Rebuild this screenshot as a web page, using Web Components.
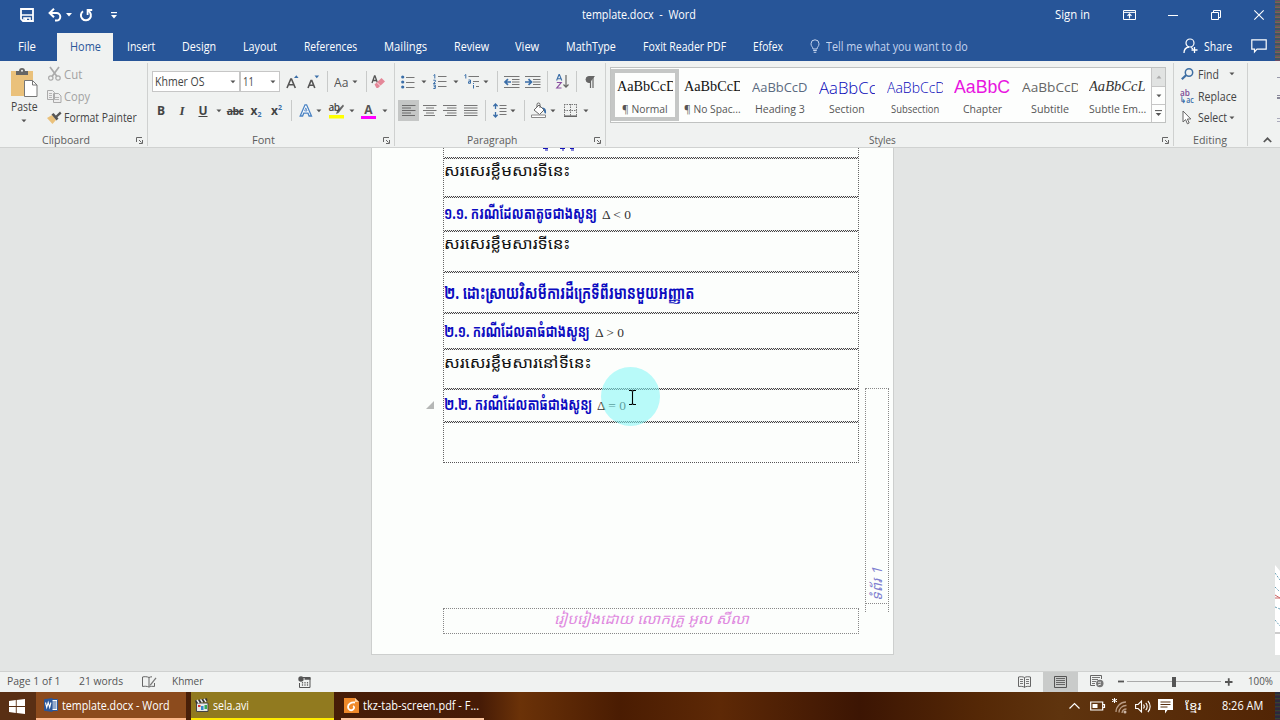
<!DOCTYPE html>
<html lang="km">
<head>
<meta charset="utf-8">
<title>template.docx - Word</title>
<style>
    html, body{
        margin: 0;
        width: 1280px;
        height: 720px;
        overflow: hidden;
        font-family: "Open Sans", "Noto Sans", "Khmer OS", "Noto Sans Khmer", sans-serif;
        font-size: 12px;
        color: #444;
    }
</style>
</head>
<body>
<word-window></word-window>
<script>
// icons: [width, height, markup]
const ICONS = {
    save: [14, 14, '<path d="M1 1h12v12H3l-2-2z" fill="none" stroke="#fff" stroke-width="1.8"/><path d="M1 7h12M4 13v-3h6v3" fill="none" stroke="#fff" stroke-width="1.6"/><path d="M5 10h2v3H5z" fill="#fff"/>'],
    undo: [14, 14, '<path d="M2 5h6.5a3.8 3.8 0 0 1 0 7.6H7" fill="none" stroke="#fff" stroke-width="2"/><path d="M6 .8 1.6 5 6 9.2" fill="none" stroke="#fff" stroke-width="2"/>'],
    redo: [14, 14, '<path d="M4 3.2a5 5 0 1 0 5.3-.3" fill="none" stroke="#fff" stroke-width="2"/><path d="M8.6 7V2h4.6" fill="none" stroke="#fff" stroke-width="1.8"/>'],
    caretw: [6, 4, '<path d="M0 0h6L3 3.4z" fill="#fff"/>'],
    qat: [6, 7, '<path d="M0 .6h6" stroke="#fff" stroke-width="1.2"/><path d="M0 3h6L3 6.4z" fill="#fff"/>'],
    caret: [6, 4, '<path d="M.4 .4h5L3 3.2z" fill="#555"/>'],
    caretlight: [6, 4, '<path d="M.4 3.4h5L3 .6z" fill="#aaa"/>'],
    more: [7, 7, '<path d="M0 .6h7" stroke="#555"/><path d="M.7 3h5.6L3.5 6z" fill="#555"/>'],
    display: [13, 10, '<path d="M.5.5h12v9H.5zM.5 2.4h12" fill="none" stroke="#fff"/><path d="M6.5 8.6V4M4.5 5.8l2-2 2 2" fill="none" stroke="#fff" stroke-width="1.2"/>'],
    min: [10, 10, '<path d="M0 5.5h10" stroke="#fff"/>'],
    restore: [10, 10, '<path d="M.5 2.5h7v7h-7zM2.5 2.5v-2h7v7h-2" fill="none" stroke="#fff"/>'],
    close: [10, 10, '<path d="m.3.3 9.4 9.4M9.7.3.3 9.7" stroke="#fff" stroke-width="1.1"/>'],
    bulb: [10, 14, '<path d="M3 10C3 8 1 7.400 1 4.800a4 4 0 0 1 8 0C9 7.400 7 8 7 10zM3.200 11.500h3.600M3.700 13.300h2.600" fill="none" stroke="#c3d3ee"/>'],
    share: [15, 16, '<circle cx="7" cy="5" r="4" fill="none" stroke="#fff" stroke-width="1.2"/><path d="M1 15c0-3.500 2-5.500 5-6M8 9.500l2 1.200M11.500 9v6M8.500 12h6" fill="none" stroke="#fff" stroke-width="1.3"/>'],
    comment: [16, 14, '<path d="M.8.8h14.400v9.400H6L3.500 13v-2.800H.8z" fill="none" stroke="#fff" stroke-width="1.200"/>'],
    paste: [28, 29, '<path d="M1 3h22v25H1z" fill="#eac17b"/><path d="M6 3h3a3 3 0 0 1 6 0h3v4H6z" fill="#666"/><circle cx="12" cy="2.800" r="1" fill="#eee"/><path d="M14.500 12.500h8l4.500 4.500v11.500H14.500z" fill="#fff" stroke="#777"/><path d="M22.500 12.500V17H27" fill="none" stroke="#777"/>'],
    cut: [13, 14, '<path d="m2 0 7 9.500M11 0 4 9.500" stroke="#aaa" stroke-width="1.700"/><circle cx="2.800" cy="11" r="2.200" fill="none" stroke="#aaa" stroke-width="1.200"/><circle cx="10" cy="11" r="2.200" fill="none" stroke="#aaa" stroke-width="1.200"/>'],
    copy: [15, 13, '<path d="M.5.500h5l2 2v7H.5zM6.500 3.500h5l2.500 2.500v6.500H6.500z" fill="#eee" stroke="#aaa"/><path d="M2 3.500h3M2 5.500h3M2 7.500h3M8 7.500h4M8 9.500h4" stroke="#b5b5b5"/>'],
    painter: [15, 13, '<path d="m0 7 5-3 4 5-3.500 4z" fill="#eac17b"/><path d="m4.500 3.500 2-1.500 5 5.500-2 2z" fill="#555"/><path d="m8.500 5 4.500-4.500 1.500 2-4.500 4z" fill="#555"/>'],
    grow: [13, 14, '<path d="m1 13 3.800-9h.7l3.800 9M2.500 9.800h5.300" fill="none" stroke="#555" stroke-width="1.600"/><path d="M8 3h4.600L10.300.2z" fill="#3a6ea8"/>'],
    shrink: [13, 14, '<path d="m1 13 3-7.500h.8l3 7.500M2.300 10.200h4.300" fill="none" stroke="#555" stroke-width="1.600"/><path d="M7.500.5h4.600L9.800 3.300z" fill="#3a6ea8"/>'],
    clear: [15, 14, '<path d="m0 8 2.500-7h.5l2.500 7M1 5.500h3.600" fill="none" stroke="#555" stroke-width="1.300"/><path d="m2.500 9.500 7-6.500 3.500 3.500-7 6.500H4.500z" fill="#e48798"/><path d="m5 7.500 3.500 3.500" stroke="#f5e5e8"/>'],
    effects: [14, 13, '<path d="M1.200 12 6 .8h1.600L12.500 12h-2.400L9 9.200H4.700L3.600 12z" fill="#fff" stroke="#4a83c3" stroke-width="1.300"/><path d="M5.600 7h2.500L6.800 3.800z" fill="#eef" stroke="#4a83c3" stroke-width=".8"/>'],
    marker: [16, 16, '<path d="M0 12h15v3.500H0z" fill="#ff0"/><path d="m7 11 1-3 6-6.500 1 1.500-5.500 7z" fill="#666"/>'],
    bullets: [14, 14, '<g fill="#3a6ea8"><circle cx="1.700" cy="2" r="1.600"/><circle cx="1.700" cy="7" r="1.600"/><circle cx="1.700" cy="12" r="1.600"/></g><path d="M5 2.500h8.500M5 7.500h8.500M5 12.500h8.500" stroke="#777"/>'],
    numbers: [14, 15, '<path d="M.5 1.500 1.800.5V4.500M.3 6.200h2v1.500L.4 9.500h2.200M.3 11h2v3.500h-2M.8 12.700h1.500" fill="none" stroke="#3a6ea8"/><path d="M5 2.500h8.500M5 7.500h8.500M5 12.500h8.500" stroke="#777"/>'],
    multi: [16, 15, '<path d="M.5 1.500 1.800.5V4.500M4.500 6h2v3.300h-2V7.700h2M9.500 11v3.500M9.500 9v1" fill="none" stroke="#3a6ea8"/><path d="M4.500 2.500H15M9 7.500h6M12 12.500h3" stroke="#777"/>'],
    outdent: [16, 12, '<path d="M0 .5h15.500M8 3.500h7.500M8 6h7.500M8 8.500h7.500M0 11.500h15.500" stroke="#777"/><path d="M7 6H1.500M4 3.200 1 6l3 2.800" fill="none" stroke="#3a6ea8" stroke-width="1.700"/>'],
    indent: [16, 12, '<path d="M0 .5h15.500M8 3.500h7.500M8 6h7.500M8 8.500h7.500M0 11.500h15.500" stroke="#777"/><path d="M0 6h5.500M3.500 3.200 6.500 6l-3 2.800" fill="none" stroke="#3a6ea8" stroke-width="1.700"/>'],
    sort: [13, 15, '<path d="m.6 6.500 2.400-6h.4l2.400 6M1.500 4.700h3.500" fill="none" stroke="#3a6ea8" stroke-width="1.100"/><path d="M.8 8.500h4.400L.8 14h4.700" fill="none" stroke="#8a4fa0" stroke-width="1.200"/><path d="M10 1v12M7.500 10.500 10 13.200l2.500-2.700" fill="none" stroke="#666" stroke-width="1.200"/>'],
    pilcrow: [10, 12, '<path d="M5 6.500H4a3 3 0 0 1 0-6h5.500" fill="#666" stroke="#666"/><path d="M5.500.5V12M8 .5V12" stroke="#666" stroke-width="1.200"/>'],
    left: [14, 11, '<path d="M0 .5h13.500M0 3h9M0 5.500h13.500M0 8h9M0 10.500h13" stroke="#6a6a6a"/>'],
    center: [14, 11, '<path d="M0 .5h13.500M3 3h8M0 5.500h13.500M3 8h8M1 10.500h11" stroke="#777"/>'],
    right: [14, 11, '<path d="M0 .5h13.500M4 3h9.500M0 5.500h13.500M4 8h9.500M2 10.500h11.500" stroke="#777"/>'],
    justify: [14, 11, '<path d="M0 .5h13.500M0 3h13.500M0 5.500h13.500M0 8h13.500M0 10.500h13.500" stroke="#777"/>'],
    spacing: [14, 15, '<path d="M2.500 1v5M2.500 9v5M.4 3.200 2.500 1l2.100 2.200M.4 11.800 2.500 14l2.100-2.200" fill="none" stroke="#3a6ea8" stroke-width="1.300"/><path d="M6.500 2.500h7M6.500 5.500h7M6.500 8.500h7M6.500 11.500h7" stroke="#777"/>'],
    bucket: [17, 15, '<path d="m3 7 5-5 5 5-4.500 4.500z" fill="#fff" stroke="#666"/><path d="M6 4V1.500a1.500 1.500 0 0 1 3 0V5" fill="none" stroke="#666"/><path d="M11 4.500c3 0 4.500 2 4 6-2 0-2-2-2-3.500z" fill="#3a6ea8"/><path d="M.5 12h14v2.500H.5z" fill="#fff" stroke="#888"/>'],
    borders: [13, 13, '<path d="M.5 0v12M6.500 0v12M12.500 0v12M0 .5h13M0 6.500h13" stroke="#777" stroke-dasharray="1.500 1"/><path d="M0 12.200h13" stroke="#555" stroke-width="1.400"/>'],
    find: [13, 12, '<circle cx="8" cy="4.500" r="3.700" fill="none" stroke="#3f6fa3" stroke-width="1.500"/><path d="m5.300 7-4.500 4.300" stroke="#3f6fa3" stroke-width="2.200"/>'],
    select: [10, 15, '<path d="M1 1v11l2.600-2.400 1.800 4.200 1.800-.8-1.800-4h3.400z" fill="#fff" stroke="#666"/>'],
    launcher: [7, 7, '<path d="M.5 5V.5H6M3 3l2.500 2.500M6.500 3v3.500H3" fill="none" stroke="#666"/>'],
    collapse: [9, 6, '<path d="m.8 5 3.700-3.700L8.200 5" fill="none" stroke="#555" stroke-width="1.700"/>'],
    proof: [15, 12, '<path d="M7 1.500C5 .5 2.500.5.500 1v9.500c2-.4 4.500-.4 6.500.6 1.500-.8 3.500-1 5.500-.6V7M7 1.500v9.500M7 1.500C8 1 9 .8 10 .8" fill="none" stroke="#666"/><path d="m8 8.500 5.500-7 1 .8-5.500 7-1.500.6z" fill="#777"/>'],
    macro: [13, 12, '<path d="M5 1.500h7v10H1.500V7" fill="none" stroke="#555"/><circle cx="3" cy="3" r="2.700" fill="#555"/><path d="M6.500 2.500h6" stroke="#555" stroke-width="2.500"/><path d="M4.500 6v4.500M7 6v4.500M9.500 6v4.500" stroke="#666" stroke-width="1.200" stroke-dasharray="1.500 .8"/>'],
    read: [13, 12, '<path d="M6.500 1.500C5 .6 2.500.6.500 1v9.500c2-.3 4.500-.3 6 .8 1.500-1.100 4-1.100 6-.8V1c-2-.4-4.500-.4-6 .5v10" fill="none" stroke="#666"/><path d="M2 3.500h3M2 5.500h3M2 7.500h3M8 3.500h3M8 5.500h3M8 7.500h3" stroke="#777"/>'],
    print: [13, 12, '<path d="M.5.500h12v11H.5z" fill="none" stroke="#555"/><path d="M2 2.500h9M2 4.500h9M2 6.500h9M2 8.500h9" stroke="#666"/>'],
    web: [14, 13, '<path d="M11.500 4V.500H.500v10H5" fill="none" stroke="#666"/><path d="M2 2.500h8M2 4.500h6M2 6.500h4M2 8.500h3" stroke="#777"/><circle cx="9.800" cy="8.500" r="3.700" fill="#777"/><path d="M8 7c1 1 2-.5 3 .5M8 10l3-1" stroke="#eee" fill="none"/>'],
    minus: [6, 3, '<path d="M0 1.500h6" stroke="#555" stroke-width="1.800"/>'],
    plus: [8, 8, '<path d="M0 4h7.500M3.750.3v7.500" stroke="#555" stroke-width="1.800"/>'],
    start: [16, 15, '<path d="m0 2 6.800-1v6H0zM7.700.9 16 0v7H7.700zM0 8h6.800v6L0 13zM7.700 8H16v7l-8.300-1z" fill="#fff"/>'],
    word: [14, 14, '<path d="M7 1.500h6.500v11H7z" fill="#fff" stroke="#2b579a"/><path d="M8 4h4.500M8 6h4.500M8 8h4.500M8 10h4.500" stroke="#2b579a"/><path d="m0 1.300 8.500-1.300v14L0 12.700z" fill="#2b579a"/><path d="m1.500 4.500 1.200 5 1.500-5 1.500 5 1.200-5" fill="none" stroke="#fff" stroke-width="1.100"/>'],
    clip: [14, 14, '<path d="M1.500 5h11.500v8.500H1.500z" fill="#e8e8e8" stroke="#444"/><path d="m0 2.500 12-2.300.5 3L1 5.500z" fill="#333"/><path d="m2 2 2 3M5.500 1.300l2 3M9 .8l2 3" stroke="#eee" stroke-width="1.500"/><path d="M3 7h2.500v2H3z" fill="#d33"/><path d="M6 8h2.500v4H6z" fill="#38c"/><path d="M9.500 7H12v4H9.500z" fill="#3a5"/>'],
    foxit: [15, 15, '<path d="M0 0h11l4 4v11H0z" fill="#ef8a2b"/><path d="M11 0v4h4" fill="#fbd0a0"/><path d="M11 4.500C7 4 4 6 4 9s3 4 5 2.500c1.500-1 1.500-3 0-3.500" fill="none" stroke="#fff" stroke-width="1.800"/>'],
    up: [11, 6, '<path d="m.5 5.500 5-5 5 5" fill="none" stroke="#fff" stroke-width="1.200"/>'],
    battery: [15, 10, '<path d="M.7 1h12v8h-12zM13 3.500h1.500v3H13" fill="none" stroke="#fff" stroke-width="1.200"/><path d="M2.500 3h5v4h-5z" fill="#fff"/>'],
    wifi: [16, 16, '<path d="M4 14A10 10 0 0 1 14 4M7 14.500a7 7 0 0 1 7.500-7M10 15a4.500 4.500 0 0 1 4.500-4" fill="none" stroke="#b99b84" stroke-width="1.300"/><circle cx="13" cy="14" r="1.500" fill="#cbb5a5"/><path d="M2.500 0v5M0 1.200l5 2.600M5 1.200 0 3.800" stroke="#fff"/>'],
    sound: [16, 13, '<path d="M.6 4.500h2.500L6.500 1v11L3.100 8.500H.6zM8.500 4.500c1 1.200 1 2.800 0 4M10.700 2.800c2 2 2 5.400 0 7.400M12.900 1c3 3 3 8 0 11" fill="none" stroke="#fff" stroke-width="1.100"/>'],
    notice: [15, 15, '<path d="M0 0h15v11H9.500L7 14.500V11H0z" fill="#fff"/><path d="M2.500 3h10M2.500 5.500h10M2.500 8h7" stroke="#59300f"/>'],
    ibeam: [7, 15, '<path d="M0 .500h2.500l1 .8 1-.8H7M0 14.500h2.500l1-.8 1 .8H7M3.500 1v13" fill="none" stroke="#000" stroke-width="1.100"/>']
};

// base class: every element clones its template in an open shadow root
class WordElement extends HTMLElement{
    constructor(){
        super();
        this.attachShadow({mode: 'open'});
    }
    connectedCallback(){
        const template = document.createElement("template");
        template.innerHTML = this.getTemplate() + `<style>${this.getStyle()}</style>`;
        this.shadowRoot.replaceChildren(template.content.cloneNode(true));
    }
    at(name){
        return this.getAttribute(name) || "";
    }
}

class MsIcon extends WordElement{
    getTemplate(){
        const [w, h, body] = ICONS[this.at("name")];
        return `<svg width="${w}" height="${h}" viewBox="0 0 ${w} ${h}">${body}</svg>`;
    }
    getStyle(){
        return `
            :host{ display: flex; flex: none; align-items: center; justify-content: center; ${this.at("w") ? `width: ${this.at("w")}px;` : ""} }
            svg{ display: block; flex: none; overflow: visible; }
        `;
    }
}

// text squeezed or stretched to a given width
class FitText extends WordElement{
    getTemplate(){
        return `<span><slot></slot></span>`;
    }
    getStyle(){
        return `
            :host{ display: block; flex: none; width: ${this.at("w")}px; white-space: pre; }
            span{ display: inline-block; transform-origin: 0 50%; }
        `;
    }
    connectedCallback(){
        super.connectedCallback();
        const span = this.shadowRoot.querySelector("span");
        const natural = span.offsetWidth;
        if(natural) span.style.transform = `scaleX(${this.at("w") / natural})`;
    }
}

class TitleBar extends WordElement{
    getTemplate(){
        return `
            <nav>
                <ms-icon name="save"></ms-icon>
                <ms-icon name="undo" style="margin-left:14px"></ms-icon>
                <ms-icon name="caretw" style="margin-left:4px"></ms-icon>
                <ms-icon name="redo" style="margin-left:7px"></ms-icon>
                <ms-icon name="qat" style="margin-left:18px"></ms-icon>
            </nav>
            <fit-text w="114">template.docx  -  Word</fit-text>
            <aside>
                <fit-text w="35">Sign in</fit-text>
                <ms-icon name="display" w="78"></ms-icon>
                <ms-icon name="min" w="9"></ms-icon>
                <ms-icon name="restore" w="77"></ms-icon>
                <ms-icon name="close" w="9"></ms-icon>
            </aside>
        `;
    }
    getStyle(){
        return `
            :host{ display: grid; grid-template-columns: 582px 114px 1fr; align-items: center; height: 33px; padding-bottom: 4px; box-sizing: border-box; color: #fff; }
            nav{ display: flex; align-items: center; padding: 1px 0 0 20px; }
            aside{ display: flex; align-items: center; padding-left: 359px; }
        `;
    }
}

class TabItem extends WordElement{
    getTemplate(){
        return `<fit-text w="${this.at("tw")}"><slot></slot></fit-text>`;
    }
    getStyle(){
        return `
            :host{ display: flex; flex: none; justify-content: center; align-items: center; box-sizing: border-box; width: ${this.at("w")}px; height: 28px; padding-bottom: 2px; }
            :host([active]){ background: #f0f2f1; color: #2b579a; }
        `;
    }
}

class TabBar extends WordElement{
    getTemplate(){
        // label, tab width, label width
        const tabs = [["File", 54, 18], ["Home", 56, 31], ["Insert", 56, 28], ["Design", 59, 34], ["Layout", 64, 34], ["References", 77, 53],
            ["Mailings", 73, 43], ["Review", 59, 35], ["View", 52, 24], ["MathType", 76, 50], ["Foxit Reader PDF", 111, 83], ["Efofex", 56, 30]];
        return tabs.map(([label, w, tw]) =>
            `<tab-item ${label == "Home" ? 'active style="margin-left:3px"' : ''} w="${w}" tw="${tw}">${label}</tab-item>`
        ).join("") + `
            <p><ms-icon name="bulb" w="10"></ms-icon><fit-text w="142">Tell me what you want to do</fit-text></p>
            <div><ms-icon name="share" w="15"></ms-icon><fit-text w="28">Share</fit-text><ms-icon name="comment" w="16"></ms-icon></div>
        `;
    }
    getStyle(){
        return `
            :host{ display: flex; height: 28px; align-items: center; color: #fff; }
            p{ display: flex; align-items: center; gap: 6px; margin: 0 0 0 14px; color: #c3d3ee; padding-bottom: 2px; }
            div{ display: flex; align-items: center; margin-left: auto; padding: 0 13px 2px 0; gap: 6px; }
            div ms-icon:last-child{ margin-left: 13px; }
        `;
    }
}

class RibbonGroup extends WordElement{
    getTemplate(){
        return `
            <main><slot></slot></main>
            <footer><fit-text w="${this.at("tw")}">${this.at("label")}</fit-text></footer>
            ${this.hasAttribute("launcher") ? '<ms-icon name="launcher"></ms-icon>' : ''}
        `;
    }
    getStyle(){
        return `
            :host{ display: grid; grid-template: 67px 20px / 1fr 16px; box-sizing: border-box; width: ${this.at("w")}px; border-image: linear-gradient(#0000 3px, #cfd1d0 3px 84px, #0000 84px) 1; border-right: 1px solid; }
            main{ grid-column: 1 / 3; min-width: 0; }
            footer{ display: flex; justify-content: center; align-items: center; padding-left: ${this.at("shift") || 0}px; color: #5c5c5c; font-size: 11px; padding-top: 3px; box-sizing: border-box; }
            ms-icon{ padding-top: 5px; }
        `;
    }
}

// horizontal strip of commands
class CommandRow extends WordElement{
    getTemplate(){ return `<slot></slot>`; }
    getStyle(){
        return `
            :host{ display: flex; align-items: center; height: ${this.at("h") || 29}px; }
            ::slotted(i){ flex: none; height: 21px; background: linear-gradient(#c8cac9, #c8cac9) center / 1px 100% no-repeat; }
            ::slotted(b){ flex: none; text-align: center; font-size: 12px; color: #444; }
        `;
    }
}

class ComboBox extends WordElement{
    getTemplate(){
        return `<fit-text w="${this.at("tw")}"><slot></slot></fit-text><ms-icon name="caret"></ms-icon>`;
    }
    getStyle(){
        return `:host{ display: flex; flex: none; align-items: center; justify-content: space-between; box-sizing: border-box; width: ${this.at("w")}px; height: 21px; padding: 0 3px 0 2px; border: 1px solid #c6c6c6; background: #fff; }`;
    }
}

class StyleCard extends WordElement{
    getTemplate(){
        return `<div><fit-text w="${this.at("pw") || 56}">${this.at("sample")}</fit-text></div><footer><fit-text w="${this.at("tw")}"><slot></slot></fit-text></footer>`;
    }
    getStyle(){
        return `
            :host{ display: grid; grid-template-rows: 27px 17px; justify-items: center; box-sizing: border-box; width: 67.5px; height: 52px; border: 4px solid transparent; }
            :host([active]){ border-color: #c5c7c6; }
            div{ display: flex; align-items: center; width: 56px; height: 28px; overflow: hidden; font: ${this.at("face")}; color: ${this.at("ink")}; }
            footer{ font-size: 11px; color: #555; line-height: 17px; }
        `;
    }
}

class StyleGallery extends WordElement{
    getTemplate(){
        return `
            <section>
                <style-card active sample="AaBbCcD" pw="59" face="14px 'Liberation Serif'" ink="#111" tw="46">¶ Normal</style-card>
                <style-card sample="AaBbCcD" pw="59" face="14px 'Liberation Serif'" ink="#111" tw="57">¶ No Spac...</style-card>
                <style-card sample="AaBbCcD" face="12.5px 'Open Sans'" ink="#5b6a80" tw="50">Heading 3</style-card>
                <style-card sample="AaBbCc" pw="58" face="300 17px 'Open Sans'" ink="#0808b8" tw="36">Section</style-card>
                <style-card sample="AaBbCcD" pw="58" face="300 14.5px 'Open Sans'" ink="#0808b8" tw="48">Subsection</style-card>
                <style-card sample="AaBbC" face="18px 'Liberation Sans'" ink="#e815e0" tw="39">Chapter</style-card>
                <style-card sample="AaBbCcD" pw="58" face="12px 'Open Sans'" ink="#666" tw="38">Subtitle</style-card>
                <style-card sample="AaBbCcL" face="italic 14px 'Liberation Serif'" ink="#333" tw="57">Subtle Em...</style-card>
            </section>
            <aside><ms-icon name="caretlight"></ms-icon><ms-icon name="caret"></ms-icon><ms-icon name="more"></ms-icon></aside>
        `;
    }
    getStyle(){
        return `
            :host{ display: flex; width: 556px; height: 56px; margin: 6px 0 0 4px; box-sizing: border-box; border: 1px solid #c0c2c1; background: #fdfefd; }
            section{ display: flex; width: 542px; padding-top: 1px; }
            aside{ display: grid; grid-template-rows: 18px 18px 18px; width: 13px; border-left: 1px solid #c6c6c6; }
            aside ms-icon + ms-icon{ border-top: 1px solid #c6c6c6; }
            aside ms-icon:first-child{ background: #e1e3e2; }
        `;
    }
}

class WordRibbon extends WordElement{
    getTemplate(){
        const sep = w => `<i style="width:${w}px"></i>`;
        const ic = (name, w) => `<ms-icon name="${name}" w="${w}"></ms-icon>`;
        return `
            <ribbon-group w="148" label="Clipboard" tw="48" launcher>
                <div class="clip">
                    <div class="paste">${ic("paste", 28)}<fit-text w="27">Paste</fit-text>${ic("caret", 8)}</div>
                    <div class="list">
                        <command-row h="22" class="dim">${ic("cut", 14)}<fit-text w="18">Cut</fit-text></command-row>
                        <command-row h="22" class="dim">${ic("copy", 14)}<fit-text w="26">Copy</fit-text></command-row>
                        <command-row h="21">${ic("painter", 14)}<fit-text w="73">Format Painter</fit-text></command-row>
                    </div>
                </div>
            </ribbon-group>
            <ribbon-group w="247" label="Font" tw="23" launcher shift="1">
                <command-row class="first" style="padding-left:4px">
                    <combo-box w="88" tw="50">Khmer OS</combo-box><combo-box w="40" tw="11">11</combo-box>
                    ${ic("grow", 25)}${ic("shrink", 16)}${sep(12)}<fit-text w="14" class="aa">Aa</fit-text>${ic("caret", 14)}${sep(8)}${ic("clear", 19)}
                </command-row>
                <command-row style="padding-left:4px">
                    <b style="width:18px">B</b><b style="width:24px;font-family:'Liberation Serif';font-style:italic;font-size:13px">I</b><b style="width:18px;text-decoration:underline">U</b>${ic("caret", 13)}
                    <b style="width:20px;font-size:10.5px;text-decoration:line-through;letter-spacing:-.6px">abc</b><b style="width:22px">x<span class="sub">2</span></b><b style="width:19px">x<span class="sup">2</span></b>
                    ${sep(10)}${ic("effects", 19)}${ic("caret", 8)}<div class="hl">${ic("marker", 16)}<span>ab</span></div>${ic("caret", 4)}<div class="fc">A</div>${ic("caret", 4)}
                </command-row>
            </ribbon-group>
            <ribbon-group w="211" label="Paragraph" tw="50" launcher>
                <command-row class="first" style="padding-left:3px">
                    ${ic("bullets", 20)}${ic("caret", 12)}${ic("numbers", 20)}${ic("caret", 12)}${ic("multi", 20)}${ic("caret", 8)}${sep(14)}${ic("outdent", 16)}${ic("indent", 26)}${sep(2)}${ic("sort", 28)}${sep(1)}${ic("pilcrow", 26)}
                </command-row>
                <command-row style="padding-left:3px">
                    <div class="on">${ic("left", 21)}</div>${ic("center", 21)}${ic("right", 20)}${ic("justify", 21)}${sep(8)}${ic("spacing", 22)}${ic("caret", 4)}${sep(18)}${ic("bucket", 12)}${ic("caret", 16)}${ic("borders", 19)}${ic("caret", 12)}
                </command-row>
            </ribbon-group>
            <ribbon-group w="568" label="Styles" tw="27" launcher shift="1"><style-gallery></style-gallery></ribbon-group>
            <ribbon-group w="74" label="Editing" tw="34" shift="14">
                <div class="edit">
                    <command-row h="22">${ic("find", 14)}<fit-text w="21">Find</fit-text><ms-icon name="caret" w="6" style="margin-left:10px"></ms-icon></command-row>
                    <command-row h="22"><div class="rep"><fit-text w="10">ab</fit-text><fit-text w="14">↳ac</fit-text></div><fit-text w="39">Replace</fit-text></command-row>
                    <command-row h="21">${ic("select", 14)}<fit-text w="29">Select</fit-text><ms-icon name="caret" w="6" style="margin-left:2px"></ms-icon></command-row>
                </div>
            </ribbon-group>
            <aside>${ic("collapse", 9)}</aside>
        `;
    }
    getStyle(){
        return `
            :host{ display: flex; height: 87px; box-sizing: border-box; background: #f0f2f1; border-bottom: 1px solid #d0d2d1; overflow: hidden; }
            .first{ padding-top: 6px; }
            .clip{ display: flex; padding-top: 2px; }
            .paste{ display: flex; flex-direction: column; align-items: center; width: 47px; padding: 5px 0 0 1px; box-sizing: border-box; }
            .paste fit-text{ line-height: 20px; }
            .paste ms-icon:last-of-type{ padding-top: 2px; }
            .list fit-text{ margin-left: 3px; }
            .dim{ color: #a2a2a2; }
            .aa{ font-size: 13px; color: #555; margin-left: 1px; }
            .sub, .sup{ font-size: 7px; color: #3a6ea8; position: relative; top: 2px; }
            .sup{ top: -5px; }
            .hl{ display: grid; width: 27px; place-items: center; }
            .hl > *{ grid-area: 1 / 1; }
            .hl ms-icon{ padding-top: 1px; }
            .hl span{ font-size: 10px; font-weight: 600; line-height: 9px; padding: 0 5px 7px 0; letter-spacing: -.5px; }
            .fc{ width: 15px; margin: 1px 7px 0; height: 15px; text-align: center; font: bold 12px/12px "Open Sans"; color: #555; border-bottom: 3px solid #f0f; box-sizing: border-box; }
            .on{ display: flex; align-items: center; height: 21px; background: #c5c7c6; }
            .edit{ padding: 2px 0 0 6px; }
            .edit command-row > fit-text{ margin-left: 4px; }
            .rep{ width: 14px; font-size: 9px; font-weight: 600; line-height: 7px; color: #7a4a96; }
            .rep fit-text{ height: 7px; }
            .rep fit-text + fit-text{ color: #3a6ea8; }
            aside{ padding: 76px 0 0 15px; }
        `;
    }
}

class DocRow extends WordElement{
    getTemplate(){
        return `
            ${this.at("tw") ? `<fit-text w="${this.at("tw")}"><slot></slot></fit-text>` : ''}
            ${this.at("math") ? `<fit-text class="math" w="29">${this.at("math")}</fit-text>` : ''}
        `;
    }
    getStyle(){
        return `
            :host{ display: flex; box-sizing: border-box; height: ${this.at("h")}px; padding-top: ${this.at("top") || 0}px; font: 15px/22px "Khmer OS", "Noto Sans Khmer", "Open Sans", sans-serif; color: #111;
                background: repeating-conic-gradient(#444 0 25%, #eee 0 50%) 0 100% / 2px 2px repeat-x; }
            :host([heading]){ color: #0c0cc0; font-weight: bold; font-size: ${this.at("size") || 16.5}px; }
            :host([last]){ background: linear-gradient(90deg, #555 50%, #fff 50%) 0 100% / 2px 1px repeat-x; }
            .math{ margin-left: 5px; padding-top: 1px; font: 13px/24px "Liberation Serif", serif; color: #333; }
        `;
    }
}

class DocPage extends WordElement{
    getTemplate(){
        return `
            <article>
                <doc-row h="11"></doc-row>
                <doc-row h="39" tw="126">សរសេរខ្លឹមសារទីនេះ</doc-row>
                <doc-row h="34" top="4" heading tw="153" math="Δ &lt; 0">១.១. ករណីដែលតាតូចជាងសូន្យ</doc-row>
                <doc-row h="41" tw="126">សរសេរខ្លឹមសារទីនេះ</doc-row>
                <doc-row h="41" top="8" heading size="18" tw="250">២. ដោះស្រាយវិសមីការដឺក្រេទីពីរមានមួយអញ្ញាត</doc-row>
                <doc-row h="36" top="6" heading tw="146" math="Δ &gt; 0">២.១. ករណីដែលតាធំជាងសូន្យ</doc-row>
                <doc-row h="40" top="1" tw="147">សរសេរខ្លឹមសារនៅទីនេះ</doc-row>
                <doc-row h="33" top="3" heading tw="148" math="Δ = 0">២.២. ករណីដែលតាធំជាងសូន្យ</doc-row>
                <doc-row h="40" last></doc-row>
            </article>
            <footer><fit-text w="195">រៀបរៀងដោយ លោកគ្រូ អូល សីលា</fit-text></footer>
            <aside><span><fit-text w="34">ទំព័រ 1</fit-text></span></aside>
            <svg class="bits" width="34" height="4"><path d="M0 .5h5M2 2h3M17 .5h5M19 2h2M27 .5h4M28 2h3" stroke="#1414b8"/></svg>
            <svg class="fold" width="8" height="8"><path d="M8 0v8H0z" fill="#b5b7b6"/></svg>
            <i class="spot"></i>
            <ms-icon name="ibeam"></ms-icon>
        `;
    }
    getStyle(){
        return `
            :host{ display: grid; position: relative; grid-template: 315px 145px 26px 1fr / 71px 416px 5px 25px; box-sizing: border-box; width: 523px; height: 507px; background: #fcfefc; border: 1px solid #cdcfce; border-top: 0; }
            article{ grid-area: 1 / 2; box-sizing: border-box; border: 1px dotted #666; border-top: 0; border-bottom: 0; }
            footer{ grid-area: 3 / 2; display: flex; justify-content: center; border: 1px dotted #888; box-sizing: border-box; font: italic 14px/20px "Khmer OS", "Noto Sans Khmer", sans-serif; color: #e08ae0; }
            /* the page number runs upwards in the margin */
            aside{ grid-area: 1 / 4 / 4 / 5; margin: 240px 0 22px 1px; border: 1px dotted #888; border-bottom: 0; box-sizing: border-box; width: 24px; padding-bottom: 11px; display: flex; align-items: flex-end; justify-content: center;
                background: linear-gradient(90deg, #888 50%, #fff 50%) 0 calc(100% - 8px) / 2px 1px repeat-x; }
            aside span{ display: block; width: 20px; height: 34px; font: italic 14px/20px "Khmer OS", "Noto Sans Khmer", sans-serif; color: #7f7fd0; }
            aside fit-text{ transform: rotate(-90deg) translateX(-34px); transform-origin: 0 0; height: 20px; }
            .bits{ position: absolute; left: 171px; top: 0; }
            .fold{ position: absolute; left: 54px; top: 253px; }
            .spot{ position: absolute; left: 229px; top: 219px; width: 59px; height: 59px; border-radius: 50%; background: #7ff6f6; opacity: .55; }
            ms-icon{ position: absolute; left: 257px; top: 242px; }
        `;
    }
}

class StatusBar extends WordElement{
    getTemplate(){
        return `
            <fit-text w="53">Page 1 of 1</fit-text>
            <fit-text w="44">21 words</fit-text>
            <ms-icon name="proof" w="15"></ms-icon>
            <fit-text w="31">Khmer</fit-text>
            <ms-icon name="macro" w="13"></ms-icon>
            <div>
                <ms-icon name="read" w="37"></ms-icon>
                <ms-icon class="on" name="print" w="35"></ms-icon>
                <ms-icon name="web" w="37"></ms-icon>
                <ms-icon name="minus" w="12"></ms-icon>
                <u><s></s></u>
                <ms-icon name="plus" w="16"></ms-icon>
                <fit-text w="25">100%</fit-text>
            </div>
        `;
    }
    getStyle(){
        return `
            :host{ display: flex; align-items: center; height: 21px; box-sizing: border-box; padding-left: 7px; background: #f0f2f1; border-top: 1px solid #cfd1d0; font-size: 11px; color: #555; }
            :host > fit-text{ margin-right: 19px; }
            :host > ms-icon{ margin-right: 15px; }
            fit-text{ padding-bottom: 3px; }
            ms-icon, u{ padding-bottom: 1px; }
            fit-text:nth-of-type(3){ margin-right: 95px; }
            div{ display: flex; align-items: center; margin-left: auto; padding-right: 7px; }
            .on{ height: 19px; background: #c9cbca; }
            u{ display: flex; justify-content: center; align-items: center; width: 94px; height: 11px; background: linear-gradient(#aaa, #aaa) 0 5px / 100% 1px no-repeat; }
            s{ width: 4px; height: 10px; background: #555; }
            div fit-text{ margin-left: 11px; }
        `;
    }
}

class TaskButton extends WordElement{
    getTemplate(){
        return `<ms-icon name="${this.at("icon")}" w="15"></ms-icon><fit-text w="${this.at("tw")}"><slot></slot></fit-text>`;
    }
    getStyle(){
        return `:host{ display: flex; align-items: center; gap: 4px; box-sizing: border-box; width: ${this.at("w")}px; height: 28px; padding-left: ${this.at("pad")}px; background: ${this.at("bg")}; border-bottom: 2px solid ${this.at("line")}; }`;
    }
}

class TaskBar extends WordElement{
    getTemplate(){
        return `
            <div class="start"><ms-icon name="start"></ms-icon></div>
            <task-button icon="word" w="150" tw="108" pad="7" bg="#8c4b1d" line="#fcb88c">template.docx - Word</task-button>
            <task-button icon="clip" w="143" tw="36" pad="3" bg="#917a1f" line="#ffea00" style="margin-left:5px">sela.avi</task-button>
            <task-button icon="foxit" w="143" tw="116" pad="3" bg="transparent" line="#fbc5a0" style="margin-left:7px">tkz-tab-screen.pdf - F...</task-button>
            <aside>
                <ms-icon name="up" w="11"></ms-icon>
                <ms-icon name="battery" w="34"></ms-icon>
                <ms-icon name="wifi" w="11"></ms-icon>
                <ms-icon name="sound" w="35"></ms-icon>
                <ms-icon name="notice" w="10"></ms-icon>
                <fit-text class="kh" w="17">ខ្មែរ</fit-text>
                <fit-text class="time" w="41">8:26 AM</fit-text>
            </aside>
        `;
    }
    getStyle(){
        return `
            :host{ display: flex; height: 28px; color: #fff; background: linear-gradient(90deg, #4a220b 0, #461b06 480px, #6b3208 520px, #4a1c02 620px, #5e2906 720px, #3c1503 860px, #552806 980px, #5f340e 1060px, #522505 1275px); }
            .start{ display: flex; align-items: center; justify-content: center; width: 36px; background: #592f14; padding-right: 2px; box-sizing: border-box; }
            aside{ display: flex; align-items: center; margin-left: auto; padding-right: 17px; }
            .kh{ margin: 0 20px 0 15px; font: 12px/20px "Khmer OS", "Noto Sans Khmer", sans-serif; }
            .time{ padding-bottom: 2px; }
        `;
    }
}

// sliver of the desktop that shows at the right of the window
class DesktopEdge extends WordElement{
    getTemplate(){
        return `
            <div class="noise"></div><div class="tools"></div>
            <svg width="5" height="100"><path d="M0 0l5 6v84H0z" fill="#fff"/><path d="M0 8l5 7M0 22l5 5M0 42l5 2M0 55l5 6" stroke="#6ba0b5" stroke-dasharray="2 1.500"/><path d="M0 30l5 3M0 33h5" stroke="#c66"/><path d="M0 68h5" stroke="#999"/></svg>
            <div class="dark"></div>
        `;
    }
    getStyle(){
        return `
            :host{ position: absolute; top: 0; right: 0; width: 5px; height: 720px; display: grid; grid-template-rows: 61px 504px 127px 28px; }
            .noise{ background: repeating-linear-gradient(#6d4a63 0 1px, #566d4a 1px 2px, #84595a 2px 3px, #3f5560 3px 5px); }
            .tools{ margin-left: 2px; background: linear-gradient(#0000 16px, #99a 16px 17px, #0000 17px 34px, #889 34px 35px, #0000 35px 36px, #889 36px 38px, #0000 38px 57px, #aab 57px 58px, #0000 58px 60px, #aab 60px 61px, #0000 61px); }
            .dark{ background: repeating-linear-gradient(#2a2a3c 0 2px, #35432f 2px 3px, #40283a 3px 4px); }
        `;
    }
}

class WordWindow extends WordElement{
    getTemplate(){
        return `
            <header><title-bar></title-bar><tab-bar></tab-bar></header>
            <word-ribbon></word-ribbon>
            <main><doc-page></doc-page></main>
            <status-bar></status-bar>
            <task-bar></task-bar>
            <desktop-edge></desktop-edge>
        `;
    }
    getStyle(){
        return `
            :host{ display: grid; grid-template-rows: 61px 87px 523px 21px 28px; position: relative; width: 1280px; height: 720px; background: #e3e5e4; overflow: hidden; }
            header{ background: #275598; }
            main{ padding-left: 371px; }
        `;
    }
}

customElements.define('word-window', WordWindow);
customElements.define('title-bar', TitleBar);
customElements.define('tab-bar', TabBar);
customElements.define('tab-item', TabItem);
customElements.define('word-ribbon', WordRibbon);
customElements.define('ribbon-group', RibbonGroup);
customElements.define('command-row', CommandRow);
customElements.define('combo-box', ComboBox);
customElements.define('style-gallery', StyleGallery);
customElements.define('style-card', StyleCard);
customElements.define('doc-page', DocPage);
customElements.define('doc-row', DocRow);
customElements.define('status-bar', StatusBar);
customElements.define('task-bar', TaskBar);
customElements.define('task-button', TaskButton);
customElements.define('desktop-edge', DesktopEdge);
customElements.define('ms-icon', MsIcon);
customElements.define('fit-text', FitText);
</script>
</body>
</html>
